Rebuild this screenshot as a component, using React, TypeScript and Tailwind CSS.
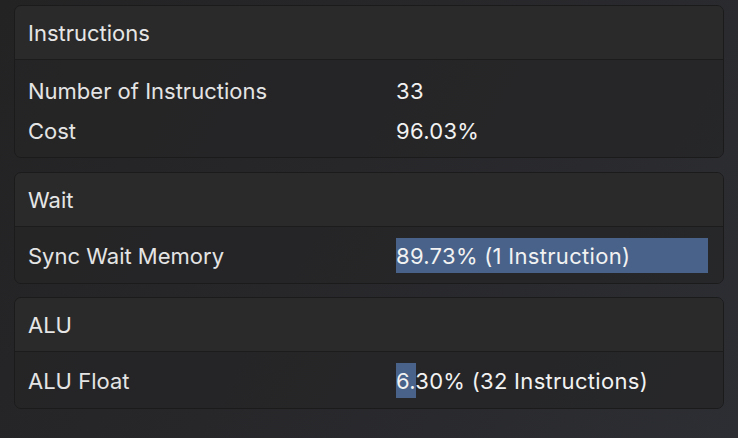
import React from "react";

type Row = { label: string; value: string; bar?: number };

function Panel({
  title,
  rows,
  bodyClass,
  rowClass,
}: {
  title: string;
  rows: Row[];
  bodyClass: string;
  rowClass: string;
}) {
  return (
    <div className="rounded-[7px] border border-[#1b1b1c] overflow-hidden">
      <div className="h-[54px] bg-[#2a2a2a] border-b border-[#1c1c1c] flex items-center pl-[13px] pt-[1px] text-[#e6e6e6]">
        {title}
      </div>
      <div className={"bg-[#262627]/75 " + bodyClass}>
        {rows.map((r) => (
          <div key={r.label} className={"flex items-center " + rowClass}>
            <div className="w-[381px] pl-[13px] pt-[1px] text-[#e4e4e4]">{r.label}</div>
            <div className="relative flex-1 h-[35px] flex items-center text-[#f2f2f2]">
              {r.bar !== undefined && (
                <div
                  className="absolute left-0 top-0 h-full bg-[#48628a]"
                  style={{ width: r.bar + "px" }}
                />
              )}
              <span className="relative pt-[1px] tracking-[0.3px]">{r.value}</span>
            </div>
          </div>
        ))}
      </div>
    </div>
  );
}

export default function App() {
  return (
    <div
      className="w-[738px] h-[438px] overflow-hidden bg-[linear-gradient(120deg,#232324_0%,#27272a_45%,#2d2e33_100%)] pl-[14px] pr-[14px] pt-[5px] text-[22px] leading-none"
      style={{ fontFamily: "Inter, 'Noto Sans', sans-serif" }}
    >
      <Panel
        title="Instructions"
        bodyClass="pt-[10px] pb-[7px]"
        rowClass="h-[40px]"
        rows={[
          { label: "Number of Instructions", value: "33" },
          { label: "Cost", value: "96.03%" },
        ]}
      />
      <div className="h-[14px]" />
      <Panel
        title="Wait"
        bodyClass="pt-[11px] pb-[10px]"
        rowClass="h-[35px]"
        rows={[{ label: "Sync Wait Memory", value: "89.73% (1 Instruction)", bar: 312 }]}
      />
      <div className="h-[13px]" />
      <Panel
        title="ALU"
        bodyClass="pt-[11px] pb-[10px]"
        rowClass="h-[35px]"
        rows={[{ label: "ALU Float", value: "6.30% (32 Instructions)", bar: 20 }]}
      />
    </div>
  );
}
